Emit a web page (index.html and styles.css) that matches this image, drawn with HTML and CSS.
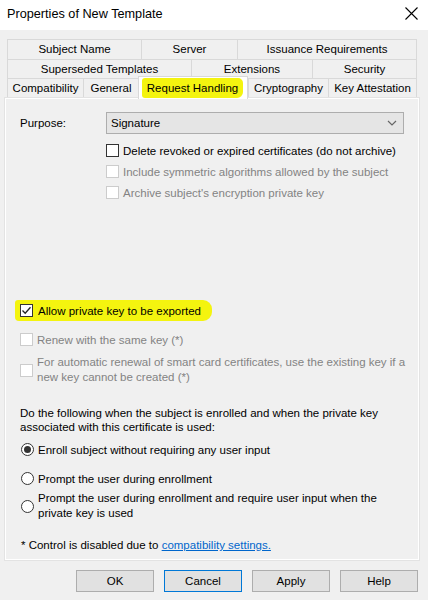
FILE: index.html
```html
<!DOCTYPE html>
<html>
<head>
<meta charset="utf-8">
<link rel="stylesheet" href="styles.css">
</head>
<body>
<div class="window">
  <div class="titlebar">
    <span class="title">Properties of New Template</span>
    <svg class="close" width="13" height="13" viewBox="0 0 13 13"><path d="M0.5 0.5 L12.5 12.5 M12.5 0.5 L0.5 12.5" stroke="#000" stroke-width="1.1" fill="none"/></svg>
  </div>
  <div class="dialog">
    <div class="tabs">
      <div class="tabrow r1">
        <div class="tab">Subject Name</div>
        <div class="tab">Server</div>
        <div class="tab last">Issuance Requirements</div>
      </div>
      <div class="tabrow r2">
        <div class="tab">Superseded Templates</div>
        <div class="tab">Extensions</div>
        <div class="tab last">Security</div>
      </div>
      <div class="tabrow r3">
        <div class="tab">Compatibility</div>
        <div class="tab">General</div>
        <div class="tab sel"><span class="tabhl">Request Handling</span></div>
        <div class="tab">Cryptography</div>
        <div class="tab last">Key Attestation</div>
      </div>
    </div>
    <div class="panel">
      <div class="purpose">
        <span class="lbl">Purpose:</span>
        <div class="select">
          <span>Signature</span>
          <svg width="10" height="6" viewBox="0 0 10 6"><polyline points="1,1 5,5 9,1" fill="none" stroke="#666" stroke-width="1.2"/></svg>
        </div>
      </div>
      <div class="checks">
        <div class="row"><span class="box"></span><span>Delete revoked or expired certificates (do not archive)</span></div>
        <div class="row dis"><span class="box"></span><span>Include symmetric algorithms allowed by the subject</span></div>
        <div class="row dis"><span class="box"></span><span>Archive subject's encryption private key</span></div>
      </div>
      <div class="row hl">
        <span class="box"><svg width="11" height="11" viewBox="0 0 11 11"><polyline points="1.5,5.5 4.2,8.3 9.5,2.2" fill="none" stroke="#222" stroke-width="1.3"/></svg></span>
        <span>Allow private key to be exported</span>
      </div>
      <div class="row dis renew"><span class="box"></span><span>Renew with the same key (*)</span></div>
      <div class="row dis multi auto"><span class="box"></span><span>For automatic renewal of smart card certificates, use the existing key if a new key cannot be created (*)</span></div>
      <p class="para">Do the following when the subject is enrolled and when the private key associated with this certificate is used:</p>
      <div class="row rad r-1"><span class="radio"><span class="dot"></span></span><span>Enroll subject without requiring any user input</span></div>
      <div class="row rad r-2"><span class="radio"></span><span>Prompt the user during enrollment</span></div>
      <div class="row rad multi r-3"><span class="radio"></span><span class="r3text">Prompt the user during enrollment and require user input when the private key is used</span></div>
      <p class="foot">* Control is disabled due to <span class="link">compatibility settings.</span></p>
    </div>
    <div class="buttons">
      <div class="btn">OK</div>
      <div class="btn focus">Cancel</div>
      <div class="btn">Apply</div>
      <div class="btn">Help</div>
    </div>
  </div>
</div>
</body>
</html>
```
FILE: styles.css
```css
html, body {
  margin: 0;
  padding: 0;
}
body {
  width: 428px;
  height: 600px;
  overflow: hidden;
  background: #f0f0f0;
  font-family: "Liberation Sans", Arial, sans-serif;
  font-size: 11.5px;
  color: #000;
}
.window {
  width: 428px;
  height: 600px;
}
.titlebar {
  height: 30px;
  box-sizing: border-box;
  background: #fff;
  display: flex;
  align-items: center;
  justify-content: space-between;
  padding: 0 10px 3px 7px;
}
.title {
  font-size: 12.7px;
  color: #000;
}
.close {
  display: block;
}
.dialog {
  height: 570px;
  box-sizing: border-box;
  padding: 9px 9px 0 5px;
  background: #f0f0f0;
}
.tabs {
  margin: 0 2px;
  width: 410px;
}
.tabrow {
  display: grid;
  height: 20px;
}
.tabrow.r2 {
  height: 19px;
}
.r1 { grid-template-columns: 134px 96px 180px; }
.r2 { grid-template-columns: 184px 121px 105px; }
.r3 { grid-template-columns: 76px 55px 110px 80px 89px; }
.tab {
  box-sizing: border-box;
  border-top: 1px solid #d9d9d9;
  border-left: 1px solid #d9d9d9;
  display: flex;
  align-items: center;
  justify-content: center;
  white-space: nowrap;
  background: #f0f0f0;
  padding-bottom: 1px;
}
.tab.last {
  border-right: 1px solid #d9d9d9;
}
.tab.sel {
  background: #fff;
  border: 1px solid #d9d9d9;
  border-bottom: none;
  margin-top: -2px;
  margin-bottom: -1px;
  z-index: 2;
  padding: 1px 4px 1px 3px;
  align-items: stretch;
}
.tabhl {
  flex: 1;
  background: #f4f40f;
  border-radius: 3px 5px 6px 3px;
  display: flex;
  align-items: center;
  justify-content: center;
}
.panel {
  box-sizing: border-box;
  width: 414px;
  height: 462px;
  border: 1px solid #fff;
  outline: 1px solid #e3e3e3;
  background: #f0f0f0;
  padding: 13px 5px 9px 14px;
}
.purpose {
  display: flex;
  align-items: center;
  height: 22px;
}
.lbl {
  width: 86px;
  flex: none;
}
.select {
  width: 298px;
  height: 22px;
  box-sizing: border-box;
  border: 1px solid #adadad;
  background: #e5e5e5;
  display: flex;
  align-items: center;
  justify-content: space-between;
  padding: 0 6px 0 4px;
}
.select svg {
  display: block;
}
.checks {
  margin-left: 86px;
  margin-top: 6px;
}
.row {
  display: flex;
  align-items: center;
  height: 21px;
  gap: 4px;
}
.row.multi {
  height: auto;
  line-height: 15px;
}
.box {
  width: 13px;
  height: 13px;
  box-sizing: border-box;
  border: 1px solid #333;
  background: #fff;
  flex: none;
  display: flex;
  align-items: center;
  justify-content: center;
}
.box svg {
  display: block;
}
.dis {
  color: #838383;
}
.dis .box {
  border-color: #cccccc;
}
.hl {
  margin-top: 97px;
  width: max-content;
  margin-left: -5px;
  padding: 0 11px 0 5px;
  background: #f4f40f;
  border-radius: 3px 9px 9px 4px;
  gap: 5px;
}
.renew {
  margin-top: 8px;
}
.auto {
  margin-top: 5px;
}
.para {
  margin: 21px 9px 0 0;
  line-height: 14px;
}
.rad {
  gap: 4px;
}
.r-1 { margin-top: 5px; }
.r-2 { margin-top: 8px; }
.r-3 { margin-top: 2px; line-height: 14px; }
.r3text {
  max-width: 350px;
}
.radio {
  width: 13px;
  height: 13px;
  box-sizing: border-box;
  border: 1px solid #333;
  border-radius: 50%;
  background: #fff;
  flex: none;
  margin-left: 1px;
  display: flex;
  align-items: center;
  justify-content: center;
}
.dot {
  width: 7px;
  height: 7px;
  border-radius: 50%;
  background: #333;
}
.foot {
  margin: 17px 0 0 1px;
  line-height: 14px;
}
.link {
  color: #0066cc;
  text-decoration: underline;
}
.buttons {
  margin-top: 10px;
  display: flex;
  justify-content: flex-end;
  gap: 10px;
  padding-right: 1px;
}
.btn {
  width: 78px;
  height: 22px;
  box-sizing: border-box;
  border: 1px solid #adadad;
  background: #e1e1e1;
  display: flex;
  align-items: center;
  justify-content: center;
}
.btn.focus {
  border-color: #0078d7;
}
```
